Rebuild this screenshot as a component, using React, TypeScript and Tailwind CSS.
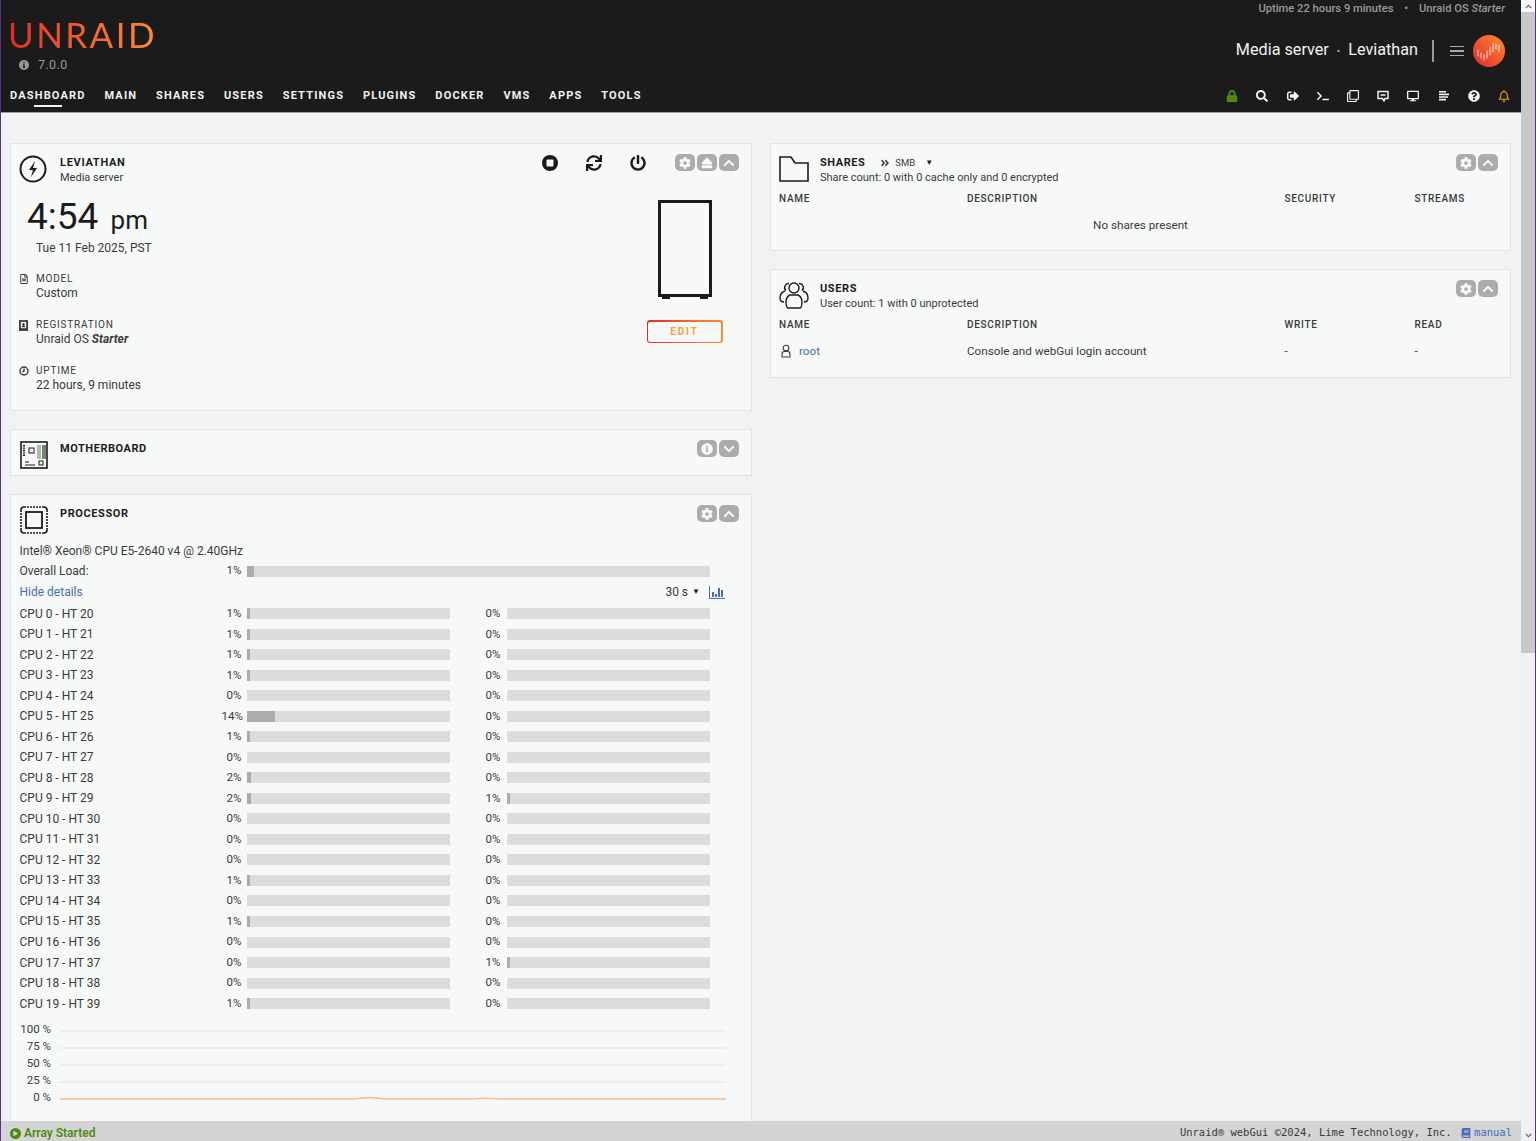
import type { ReactNode } from "react"
import {
  FaAngleDoubleRight,
  FaBook,
  FaChevronDown,
  FaChevronUp,
  FaCog,
  FaDesktop,
  FaEject,
  FaInfo,
  FaInfoCircle,
  FaLock,
  FaPlay,
  FaPowerOff,
  FaQuestionCircle,
  FaRegBell,
  FaRegClone,
  FaRegFileAlt,
  FaSearch,
  FaSignOutAlt,
  FaSync,
  FaTerminal,
} from "react-icons/fa"

const navItems = ["DASHBOARD", "MAIN", "SHARES", "USERS", "SETTINGS", "PLUGINS", "DOCKER", "VMS", "APPS", "TOOLS"]

const cpuRows: [string, number, number][] = [
  ["CPU 0 - HT 20", 1, 0],
  ["CPU 1 - HT 21", 1, 0],
  ["CPU 2 - HT 22", 1, 0],
  ["CPU 3 - HT 23", 1, 0],
  ["CPU 4 - HT 24", 0, 0],
  ["CPU 5 - HT 25", 14, 0],
  ["CPU 6 - HT 26", 1, 0],
  ["CPU 7 - HT 27", 0, 0],
  ["CPU 8 - HT 28", 2, 0],
  ["CPU 9 - HT 29", 2, 1],
  ["CPU 10 - HT 30", 0, 0],
  ["CPU 11 - HT 31", 0, 0],
  ["CPU 12 - HT 32", 0, 0],
  ["CPU 13 - HT 33", 1, 0],
  ["CPU 14 - HT 34", 0, 0],
  ["CPU 15 - HT 35", 1, 0],
  ["CPU 16 - HT 36", 0, 0],
  ["CPU 17 - HT 37", 0, 1],
  ["CPU 18 - HT 38", 0, 0],
  ["CPU 19 - HT 39", 1, 0],
]

function CtrlButton({ children }: { children: ReactNode }) {
  return (
    <span className="flex h-[17px] w-[20px] items-center justify-center rounded-[5px] bg-[#acacac] text-[12px] text-[#f7f9f9]">
      {children}
    </span>
  )
}

function CtrlGroup({ children }: { children: ReactNode }) {
  return <div className="mt-[-1px] flex gap-[2px]">{children}</div>
}

function Card({ className, children }: { className: string; children: ReactNode }) {
  return <section className={`relative border border-[#e3e3e3] bg-[#f7f9f9] ${className}`}>{children}</section>
}

function Bar({ value, className }: { value: number; className: string }) {
  return (
    <div className={`h-[11px] bg-[#dcdcdc] ${className}`}>
      {/* minimum sliver so that 1% stays visible */}
      <div className="h-full bg-[#acacac]" style={{ width: value === 0 ? 0 : `${Math.max(value, 1.5)}%` }} />
    </div>
  )
}

function InfoBlock({ icon, label, children }: { icon: ReactNode; label: string; children: ReactNode }) {
  return (
    <div className="flex">
      <span className="flex h-[14px] w-[25px] items-center pl-[8px] text-[10px] text-[#3a3a3a]">{icon}</span>
      <div>
        <div className="text-[10px] leading-[14px] tracking-[0.8px] text-[#3a3a3a]">{label}</div>
        <div className="text-[12px] leading-[14px]">{children}</div>
      </div>
    </div>
  )
}

function TopIcon({ children, className = "text-[#f2f2f2]" }: { children: ReactNode; className?: string }) {
  return <span className={`flex h-[14px] w-[30.2px] items-center justify-center text-[12px] ${className}`}>{children}</span>
}

function Header() {
  return (
    <header className="flex h-[113px] shrink-0 flex-col border-b border-[#9a9a9a] bg-[#1c1b1b] pr-[16px] pl-[9px]">
      <div className="flex h-[81px] justify-between">
        <div>
          <div className="mt-[14px] ml-[-2px] w-fit bg-gradient-to-r from-[#e22828] to-[#ff8c2f] bg-clip-text font-['Lato'] text-[35px] leading-[40px] font-normal tracking-[2.4px] text-transparent">
            UNRAID
          </div>
          <div className="mt-[3px] flex items-center pl-[9px] text-[12.5px] leading-[16px] tracking-[0.4px] text-[#999]">
            <span className="mr-[9px] flex h-[10px] w-[10px] items-center justify-center rounded-full bg-[#999] text-[6px] text-[#1c1b1b]">
              <FaInfo />
            </span>
            7.0.0
          </div>
        </div>
        <div className="flex flex-col items-end">
          <div className="mt-[1px] text-[11.2px] leading-[16px] font-medium text-[#999]">
            Uptime 22 hours 9 minutes <span className="mx-[8px]">•</span> Unraid OS <em>Starter</em>
          </div>
          <div className="mt-[18px] flex items-center">
            <span className="text-[16.2px] leading-[20px] text-[#f2f2f2]">
              Media server <span className="mx-[4px] text-[10px] text-[#aaa]">•</span> Leviathan
            </span>
            <span className="ml-[14px] h-[22px] w-[2px] bg-[#999]" />
            <span className="ml-[16px] flex w-[14px] flex-col gap-[3px]">
              <span className="h-[1.5px] bg-[#aaa]" />
              <span className="h-[1.5px] bg-[#aaa]" />
              <span className="h-[1.5px] bg-[#aaa]" />
            </span>
            <svg viewBox="0 0 32 32" className="ml-[9px] h-[32px] w-[32px]">
              <defs>
                <linearGradient id="avatar" x1="0" y1="1" x2="1" y2="0">
                  <stop offset="0" stopColor="#e22828" />
                  <stop offset="1" stopColor="#ff8c2f" />
                </linearGradient>
              </defs>
              <circle cx="16" cy="16" r="16" fill="url(#avatar)" />
              <path
                d="M5 15v6M8 18v5M11 20v5M14 16v7M17 12v8M20 9v8M23 9v5M26 10v7"
                stroke="#fff"
                strokeWidth="1"
                strokeOpacity=".85"
                strokeLinecap="round"
              />
            </svg>
          </div>
        </div>
      </div>
      <nav className="mr-[-14px] flex h-[30px] items-center justify-between">
        <div className="flex gap-[18.85px]">
          {navItems.map((item) => (
            <a key={item} className="relative text-[11px] leading-[16px] font-bold tracking-[1.17px] text-[#f2f2f2]">
              {item}
              {item === "DASHBOARD" ? (
                <span className="absolute top-[17px] left-[24px] h-[2px] w-[28px] bg-[#f2f2f2]" />
              ) : null}
            </a>
          ))}
        </div>
        <div className="flex">
          <TopIcon className="text-[#4f8a10]"><FaLock /></TopIcon>
          <TopIcon><FaSearch /></TopIcon>
          <TopIcon><FaSignOutAlt /></TopIcon>
          <TopIcon><FaTerminal /></TopIcon>
          <TopIcon><FaRegClone /></TopIcon>
          <TopIcon>
            <svg viewBox="0 0 12 12" className="h-[12px] w-[12px]" fill="none" stroke="currentColor" strokeWidth="1.500">
              <path d="M1 1.500h10v7H8L7 11 5.500 8.500H1zM3.500 5h5" />
            </svg>
          </TopIcon>
          <TopIcon><FaDesktop /></TopIcon>
          <TopIcon>
            <svg viewBox="0 0 12 12" className="h-[12px] w-[12px]" fill="currentColor">
              <path d="M1 1h7v1.6H1zM1 3.6h10v1.6H1zM1 6.2h9v1.6H1zM1 8.8h7v1.6H1z" />
            </svg>
          </TopIcon>
          <TopIcon><FaQuestionCircle /></TopIcon>
          <TopIcon className="text-[#f39c12]"><FaRegBell /></TopIcon>
        </div>
      </nav>
    </header>
  )
}

function ServerCard() {
  return (
    <Card className="h-[268px]">
      <div className="flex items-start pt-[11px] pl-[8px]">
        <svg viewBox="0 0 28 28" className="h-[28px] w-[28px]" fill="none">
          <circle cx="14" cy="14" r="12.5" stroke="#1c1b1b" strokeWidth="2" />
          <path d="M16 6l-6 9h4l-2 7 6-9h-4z" fill="#1c1b1b" />
        </svg>
        <div className="ml-[13px]">
          <div className="text-[11px] leading-[16px] font-bold tracking-[0.7px] text-[#1c1b1b]">LEVIATHAN</div>
          <div className="text-[11px] leading-[13px]">Media server</div>
        </div>
        <div className="mt-[-1px] ml-auto flex items-center pr-[12px] text-[#1c1b1b]">
          <svg viewBox="0 0 16 16" className="mr-[28px] h-[16px] w-[16px]">
            <circle cx="8" cy="8" r="8" fill="#1c1b1b" />
            <rect x="4.500" y="4.500" width="7" height="7" rx="1" fill="#f7f9f9" />
          </svg>
          <FaSync className="mr-[28px] text-[16px]" />
          <FaPowerOff className="mr-[29px] text-[16px]" />
          <div className="flex gap-[2px]">
            <CtrlButton><FaCog /></CtrlButton>
            <CtrlButton><FaEject /></CtrlButton>
            <CtrlButton><FaChevronUp /></CtrlButton>
          </div>
        </div>
      </div>
      <div className="mt-[3px] flex">
        <div className="flex-1">
          <div className="mt-[11px] pl-[16px] text-[37px] leading-[38px] text-[#1c1b1b]">
            4:54 <span className="ml-[3px] text-[26px]">pm</span>
          </div>
          <div className="mt-[1px] pl-[25px] text-[12px] leading-[16px]">Tue 11 Feb 2025, PST</div>
          <div className="mt-[16px] flex flex-col gap-[18px]">
            <InfoBlock icon={<FaRegFileAlt />} label="MODEL">Custom</InfoBlock>
            <InfoBlock
              icon={
                <svg viewBox="0 0 10 12" className="h-[11px] w-[9px]">
                  <path d="M0 0h10v12H0z" fill="#3a3a3a" />
                  <path d="M2 2h6v7H2z" fill="#f7f9f9" />
                  <circle cx="5" cy="4.600" r="1.300" fill="#3a3a3a" />
                  <path d="M3 8c0-3 4-3 4 0z" fill="#3a3a3a" />
                </svg>
              }
              label="REGISTRATION"
            >
              Unraid OS <em className="font-bold">Starter</em>
            </InfoBlock>
            <InfoBlock
              icon={
                <svg viewBox="0 0 10 10" className="h-[10px] w-[10px]" fill="none" stroke="#3a3a3a" strokeWidth="1.4">
                  <circle cx="5" cy="5" r="4" />
                  <path d="M5 2.600V5l-1.600 1" />
                </svg>
              }
              label="UPTIME"
            >
              22 hours, 9 minutes
            </InfoBlock>
          </div>
        </div>
        <div className="mr-[14px] flex w-[105px] flex-col items-center pt-[13px]">
          <svg viewBox="0 0 54 99" className="h-[99px] w-[54px]">
            <rect x="1.500" y="1.500" width="51" height="94" fill="none" stroke="#1c1b1b" strokeWidth="3" />
            <rect x="4" y="95" width="8" height="4" fill="#1c1b1b" />
            <rect x="42" y="95" width="8" height="4" fill="#1c1b1b" />
          </svg>
          <div className="mt-[21px] rounded-[3px] bg-gradient-to-r from-[#e22828] to-[#ff8c2f] p-[1.5px]">
            <div className="flex h-[20px] w-[73px] items-center justify-center rounded-[2px] bg-[#f7f9f9] text-[10px] font-bold tracking-[1.8px] text-[#ff9a4a]">
              EDIT
            </div>
          </div>
        </div>
      </div>
    </Card>
  )
}

function MotherboardCard() {
  return (
    <Card className="mt-[18px] h-[47px]">
      <div className="flex items-start pt-[11px] pl-[9px]">
        <svg viewBox="0 0 28 28" className="h-[28px] w-[28px]" fill="none" stroke="#1c1b1b">
          <rect x="1" y="1" width="26" height="26" strokeWidth="1.600" />
          <path d="M4 4v12" strokeWidth="2" strokeDasharray="1.400 1" />
          <rect x="9" y="7" width="5" height="5" strokeWidth="1" />
          <path d="M18 4v14M20 4v14" stroke="#6f9a6a" strokeWidth="1.200" />
          <path d="M23 4v14M25 4v14" strokeWidth="1.100" />
          <path d="M5 21h4M5 24h10" strokeWidth="1" />
          <rect x="19" y="20" width="4" height="4" strokeWidth="1" />
        </svg>
        <div className="ml-[12px] text-[11px] leading-[16px] font-bold tracking-[0.55px] text-[#1c1b1b]">MOTHERBOARD</div>
        <div className="ml-auto pr-[12px]">
          <CtrlGroup>
            <CtrlButton><FaInfoCircle /></CtrlButton>
            <CtrlButton><FaChevronDown /></CtrlButton>
          </CtrlGroup>
        </div>
      </div>
    </Card>
  )
}

function ProcessorCard() {
  return (
    <Card className="mt-[18px] h-[700px]">
      <div className="flex items-start pt-[11px] pl-[9px]">
        <svg viewBox="0 0 28 28" className="h-[28px] w-[28px]" fill="none" stroke="#1c1b1b">
          <path d="M4 1h20M4 27h20M1 4v20M27 4v20" strokeWidth="1.600" strokeDasharray="2 1" />
          <path d="M1 4a3 3 0 013-3M24 1a3 3 0 013 3M27 24a3 3 0 01-3 3M4 27a3 3 0 01-3-3" strokeWidth="1.600" />
          <rect x="6" y="6" width="16" height="16" strokeWidth="1.800" />
        </svg>
        <div className="ml-[12px] text-[11px] leading-[16px] font-bold tracking-[0.6px] text-[#1c1b1b]">PROCESSOR</div>
        <div className="ml-auto pr-[12px]">
          <CtrlGroup>
            <CtrlButton><FaCog /></CtrlButton>
            <CtrlButton><FaChevronUp /></CtrlButton>
          </CtrlGroup>
        </div>
      </div>
      <div className="mt-[7px] pl-[8.5px] text-[12px] leading-[20px]">Intel® Xeon® CPU E5-2640 v4 @ 2.40GHz</div>
      <div className="flex h-[20px] items-center pl-[8.5px] text-[12px]">
        <span className="w-[202px]">Overall Load:</span>
        <span className="w-[20px] text-right text-[11.5px]">1%</span>
        <Bar value={1} className="ml-[5.5px] w-[463px]" />
      </div>
      <div className="flex h-[22.5px] items-center pl-[8.5px] text-[12px]">
        <a className="text-[#486dba]">Hide details</a>
        <span className="ml-auto">30 s</span>
        <span className="ml-[4px] text-[8px] text-[#1c1b1b]">▼</span>
        <svg viewBox="0 0 16 13" className="mr-[26px] ml-[9px] h-[13px] w-[16px]" fill="#486dba">
          <path d="M0 0h1v12h15v1H0zM3 6h2v5H3zM6 8h2v3H6zM9 2h2v9H9zM12 4h2v7h-2z" />
        </svg>
      </div>
      {cpuRows.map(([name, a, b]) => (
        <div key={name} className="flex h-[20.53px] items-center pl-[8.5px] text-[12px]">
          <span className="w-[202px]">{name}</span>
          <span className="w-[20px] text-right text-[11.5px]">{a}%</span>
          <Bar value={a} className="ml-[5.5px] w-[203px]" />
          <span className="ml-[30.5px] w-[20px] text-right text-[11.5px]">{b}%</span>
          <Bar value={b} className="ml-[6.5px] w-[203px]" />
        </div>
      ))}
      <div className="mt-[7.5px] grid grid-cols-[40px_1fr]">
        <div className="flex flex-col text-right text-[11.5px] leading-[17px] text-[#3a3a3a]">
          <span>100 %</span>
          <span>75 %</span>
          <span>50 %</span>
          <span>25 %</span>
          <span>0 %</span>
        </div>
        <svg viewBox="0 0 666 85" className="ml-[9px] h-[85px] w-[666px]" fill="none">
          <path d="M0 10h666M0 27h666M0 44h666M0 61h666" stroke="#e3e5e5" />
          <path
            d="M0 78h290c10 0 15-1.500 20-1.500s10 1.500 20 1.500h79c6 0 10-.8 16-.8s10 .8 16 .8h225"
            stroke="#f7b98a"
            strokeWidth="1.400"
          />
        </svg>
      </div>
    </Card>
  )
}

function ColumnHeads({ heads }: { heads: [string, string, string, string] }) {
  return (
    <div className="grid grid-cols-[188px_317.500px_130px_1fr] pl-[8px] text-[10px] leading-[14px] font-medium tracking-[0.7px] text-[#3a3a3a]">
      {heads.map((h) => (
        <span key={h}>{h}</span>
      ))}
    </div>
  )
}

function SharesCard() {
  return (
    <Card className="h-[108px]">
      <div className="flex items-start pt-[11px] pl-[8px]">
        <svg viewBox="0 0 30 26" className="mt-[1px] h-[26px] w-[30px]" fill="none" stroke="#1c1b1b" strokeWidth="1.600">
          <path d="M1 1h11l4 6h13v18H1z" />
        </svg>
        <div className="ml-[11px]">
          <div className="flex items-center text-[11px] leading-[16px] font-bold tracking-[0.55px] text-[#1c1b1b]">
            SHARES
            <FaAngleDoubleRight className="ml-[15px] text-[10px] text-[#3a3a3a]" />
            <span className="ml-[5px] text-[9.5px] font-normal tracking-[0px] text-[#3a3a3a]">SMB</span>
            <span className="ml-[10px] text-[8px] font-normal">▼</span>
          </div>
          <div className="text-[11px] leading-[13px]">Share count: 0 with 0 cache only and 0 encrypted</div>
        </div>
        <div className="ml-auto pr-[12px]">
          <CtrlGroup>
            <CtrlButton><FaCog /></CtrlButton>
            <CtrlButton><FaChevronUp /></CtrlButton>
          </CtrlGroup>
        </div>
      </div>
      <div className="mt-[8px]">
        <ColumnHeads heads={["NAME", "DESCRIPTION", "SECURITY", "STREAMS"]} />
      </div>
      <div className="mt-[11px] text-center text-[11.7px] leading-[16px]">No shares present</div>
    </Card>
  )
}

function UsersCard() {
  return (
    <Card className="mt-[18px] h-[109px]">
      <div className="flex items-start pt-[11px] pl-[8px]">
        <svg viewBox="0 0 30 28" className="h-[28px] w-[30px]" fill="none" stroke="#1c1b1b" strokeWidth="1.400">
          <circle cx="15" cy="7" r="5" />
          <path d="M9 27c-2-1-2-3-2-6 0-3 2-6 4-7h8c2 1 4 4 4 7 0 3 0 5-2 6z" />
          <path d="M10 2.500a4 4 0 00-3 7M20 2.500a4 4 0 013 7M6 10c-3 1-5 4-5 7 0 2 1 4 4 4M24 10c3 1 5 4 5 7 0 2-1 4-4 4" />
        </svg>
        <div className="ml-[11px]">
          <div className="text-[11px] leading-[16px] font-bold tracking-[0.6px] text-[#1c1b1b]">USERS</div>
          <div className="text-[11px] leading-[13px]">User count: 1 with 0 unprotected</div>
        </div>
        <div className="ml-auto pr-[12px]">
          <CtrlGroup>
            <CtrlButton><FaCog /></CtrlButton>
            <CtrlButton><FaChevronUp /></CtrlButton>
          </CtrlGroup>
        </div>
      </div>
      <div className="mt-[8px]">
        <ColumnHeads heads={["NAME", "DESCRIPTION", "WRITE", "READ"]} />
      </div>
      <div className="mt-[11px] grid grid-cols-[188px_317.500px_130px_1fr] pl-[8px] text-[11.7px] leading-[16px]">
        <span className="flex items-center">
          <svg viewBox="0 0 10 14" className="ml-[2px] h-[14px] w-[10px]" fill="none" stroke="#3a3a3a" strokeWidth="1.100">
            <circle cx="5" cy="4" r="2.800" />
            <path d="M1 13V10c0-1.500 1-2.500 2.500-2.500h3C8 7.500 9 8.500 9 10v3z" />
          </svg>
          <a className="ml-[8px] text-[#486dba]">root</a>
        </span>
        <span>Console and webGui login account</span>
        <span>-</span>
        <span>-</span>
      </div>
    </Card>
  )
}

function Footer() {
  return (
    <footer className="flex h-[20px] shrink-0 items-center justify-between bg-[#d4d4d4] pt-[4px] pr-[9px] pl-[9px]">
      <span className="flex items-center text-[12px] font-semibold text-[#4f8a10]">
        <span className="mr-[3px] flex h-[11px] w-[11px] items-center justify-center rounded-full bg-[#4f8a10] text-[5px] text-[#d4d4d4]">
          <FaPlay />
        </span>
        Array Started
      </span>
      <span className="font-['DejaVu_Sans_Mono'] text-[10.500px] text-[#3a3a3a]">
        Unraid® webGui ©2024, Lime Technology, Inc. <FaBook className="mx-[3px] inline text-[10px] text-[#486dba]" />
        <a className="text-[#486dba]">manual</a>
      </span>
    </footer>
  )
}

export default function App() {
  return (
    <div className="flex h-[1141px] w-[1536px] overflow-hidden bg-[#f2f2f2] font-['Roboto',sans-serif] text-[#3a3a3a]">
      <div className="w-[1px] shrink-0 bg-[#5b2d8e]" />
      <div className="flex min-w-0 flex-1 flex-col">
        <Header />
        <main className="grid min-h-0 flex-1 grid-cols-[742px_741px] gap-x-[18px] overflow-hidden pt-[30px] pl-[9px]">
          <div>
            <ServerCard />
            <MotherboardCard />
            <ProcessorCard />
          </div>
          <div>
            <SharesCard />
            <UsersCard />
          </div>
        </main>
        <Footer />
      </div>
      <div className="flex w-[14px] shrink-0 flex-col bg-[#f1f1f1]">
        <div className="flex h-[12px] items-center justify-center bg-[#f8f8f8] text-[7px] text-[#555]">
          <FaChevronUp />
        </div>
        <div className="h-[641px] bg-[#c8c8c8]" />
        <div className="mt-auto flex h-[12px] items-center justify-center text-[7px] text-[#555]">
          <FaChevronDown />
        </div>
      </div>
      <div className="w-[1px] shrink-0 bg-[#5b2d8e]" />
    </div>
  )
}
